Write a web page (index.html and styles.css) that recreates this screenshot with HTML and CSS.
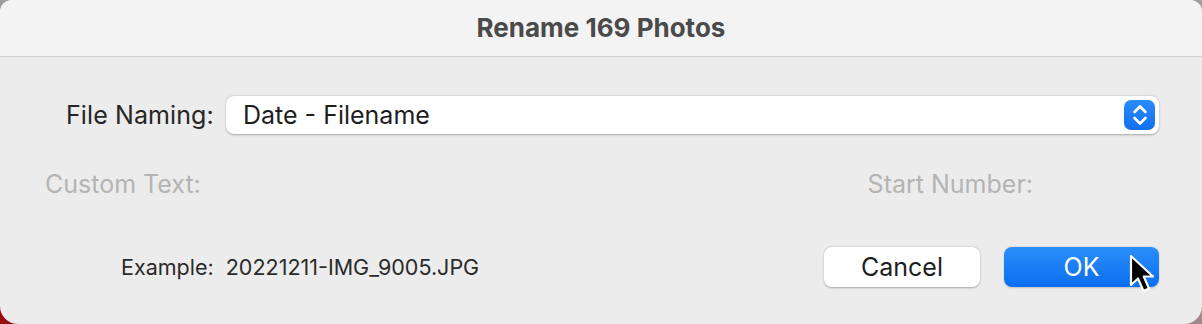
FILE: index.html
```html
<!DOCTYPE html>
<html lang="en">
<head>
    <meta charset="UTF-8">
    <title>Rename 169 Photos</title>
    <link rel="stylesheet" href="styles.css">
</head>
<body>
    <div class="dialog">
        <div class="titlebar">Rename 169 Photos</div>

        <div class="content">
            <div class="row naming">
                <label class="label">File Naming:</label>
                <div class="select">
                    <span class="select-value">Date - Filename</span>
                    <span class="stepper">
                        <svg width="18" height="26" viewBox="0 0 18 26">
                            <path d="M3.5 10 L9 4.5 L14.5 10" />
                            <path d="M3.5 16 L9 21.5 L14.5 16" />
                        </svg>
                    </span>
                </div>
            </div>

            <div class="row disabled">
                <span>Custom Text:</span>
                <span>Start Number:</span>
            </div>

            <div class="row footer">
                <span class="example">Example:&nbsp; 20221211-IMG_9005.JPG</span>
                <button class="btn cancel">Cancel</button>
                <button class="btn ok">OK</button>
            </div>
        </div>

        <!-- mouse pointer over the OK button -->
        <svg class="cursor" width="30" height="42" viewBox="0 0 30 42">
            <path d="M3 2 L3 31 L10 24.5 L15.5 37 L21 34.5 L15.8 22.5 L25 22.5 Z"
                  fill="#000" stroke="#fff" stroke-width="2.2" stroke-linejoin="round" />
        </svg>
    </div>
</body>
</html>
```

FILE: styles.css
```css
* {
    margin: 0;
    padding: 0;
    box-sizing: border-box;
}

body {
    width: 1202px;
    height: 324px;
    overflow: hidden;
    font-family: Inter, "Noto Sans", sans-serif;
    background:
        linear-gradient(to right, #9a0d0d 0, #9a0d0d 50%, #a48787 50%, #a48787 100%) bottom / 100% 50% no-repeat,
        linear-gradient(to right, #9c9c9c, #a0a0a0) top / 100% 50% no-repeat;
}

.dialog {
    position: relative;
    width: 1202px;
    height: 324px;
    background: #ececec;
    border-radius: 12px 12px 18px 18px;
    overflow: hidden;
}

.titlebar {
    height: 57px;
    background: #f3f3f3;
    border-bottom: 1px solid #d4d4d4;
    display: flex;
    align-items: center;
    justify-content: center;
    font-size: 26px;
    line-height: 30px;
    font-weight: 700;
    color: #4a4a4a;
}

.content {
    display: flex;
    flex-direction: column;
    padding-top: 39px;
}

.row {
    display: flex;
    align-items: center;
}

.naming {
    padding: 0 43px 0 66px;
    gap: 11px;
}

.label {
    width: 149px;
    font-size: 25px;
    line-height: 30px;
    letter-spacing: 0.1px;
    color: #262626;
}

.select {
    flex: 1;
    height: 38px;
    background: #fff;
    border-radius: 8px;
    box-shadow: 0 0.5px 2px rgba(0, 0, 0, 0.3);
    display: flex;
    align-items: center;
    justify-content: space-between;
    padding: 0 4px 0 17px;
}

.select-value {
    font-size: 25px;
    line-height: 30px;
    color: #1e1e1e;
}

.stepper {
    width: 31px;
    height: 30px;
    border-radius: 7px;
    background: linear-gradient(#2a8bf9, #136ff0);
    display: flex;
    align-items: center;
    justify-content: center;
}

.stepper path {
    fill: none;
    stroke: #fff;
    stroke-width: 2.6;
    stroke-linecap: round;
    stroke-linejoin: round;
}

.disabled {
    justify-content: space-between;
    padding: 0 169px 0 45px;
    margin-top: 37px;
    font-size: 25px;
    line-height: 26px;
    color: #b4b4b4;
}

.footer {
    padding: 0 43px 0 121px;
    margin-top: 50px;
    gap: 24px;
}

.example {
    font-size: 21.5px;
    color: #2a2a2a;
    margin-right: auto;
}

.btn {
    height: 40px;
    border: none;
    border-radius: 8px;
    font-family: inherit;
    font-size: 25px;
}

.cancel {
    width: 156px;
    background: #fff;
    color: #1e1e1e;
    box-shadow: 0 0.5px 2px rgba(0, 0, 0, 0.3);
}

.ok {
    width: 155px;
    background: linear-gradient(#2b8ef9, #0a6ef0);
    color: #fff;
    box-shadow: 0 0.5px 2px rgba(0, 0, 0, 0.2);
}

.cursor {
    position: absolute;
    left: 1128px;
    top: 254px;
}
```
